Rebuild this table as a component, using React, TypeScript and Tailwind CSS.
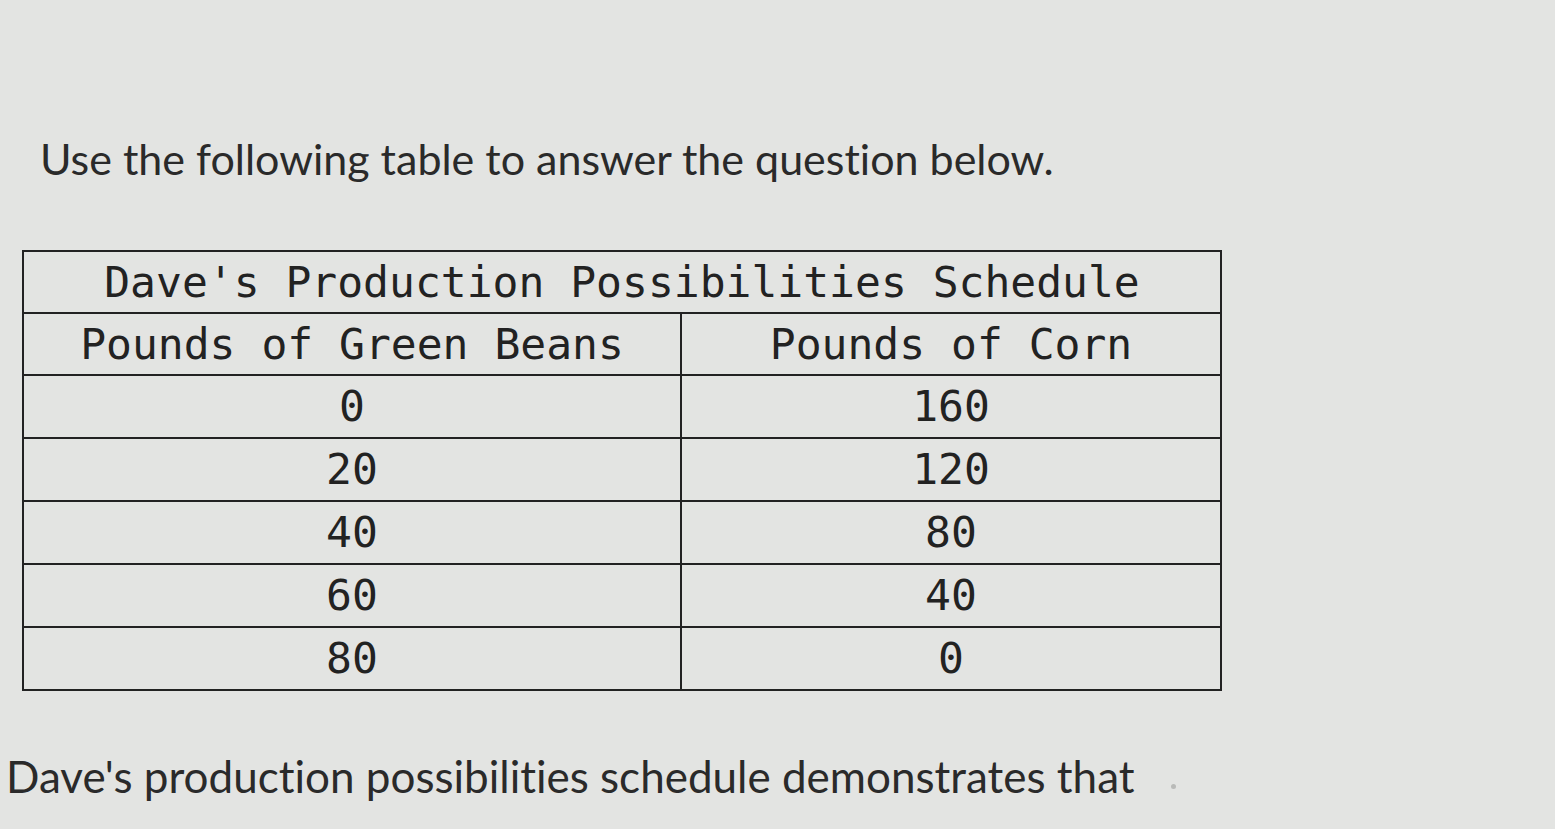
const rows = [
  { beans: '0', corn: '160' },
  { beans: '20', corn: '120' },
  { beans: '40', corn: '80' },
  { beans: '60', corn: '40' },
  { beans: '80', corn: '0' },
];

const mono = "font-['DejaVu_Sans_Mono',monospace]";

export default function App() {
  return (
    <div className="min-h-[829px] w-full bg-[#e3e4e2] text-[#2a2a2a] font-['Lato','Noto_Sans',sans-serif] [font-variant-ligatures:none] flex flex-col">
      <p className="pl-[40px] pt-[134px] text-[43px] leading-[50px]">
        Use the following table to answer the question below.
      </p>

      <table className={`ml-[22px] mt-[66px] w-[1200px] border-collapse text-[43px] text-[#222] slashed-zero ${mono}`}>
        <thead>
          <tr className="h-[62px]">
            <th colSpan={2} className="border-2 border-[#222] font-normal leading-none">
              Dave's Production Possibilities Schedule
            </th>
          </tr>
          <tr className="h-[62px]">
            <th className="w-[658px] border-2 border-[#222] font-normal leading-none">
              Pounds of Green Beans
            </th>
            <th className="border-2 border-[#222] font-normal leading-none">Pounds of Corn</th>
          </tr>
        </thead>
        <tbody>
          {rows.map((r, i) => (
            <tr key={i} className="h-[63px]">
              <td className="border-2 border-[#222] text-center leading-none">{r.beans}</td>
              <td className="border-2 border-[#222] text-center leading-none">{r.corn}</td>
            </tr>
          ))}
        </tbody>
      </table>

      <div className="pl-[6px] mt-[60px] flex items-end gap-[36px]">
        <p className="text-[44px] leading-[50px]">
          Dave's production possibilities schedule demonstrates that
        </p>
        <span className="mb-[12px] w-[5px] h-[5px] rounded-full bg-[#b9bab8]" />
      </div>
    </div>
  );
}
